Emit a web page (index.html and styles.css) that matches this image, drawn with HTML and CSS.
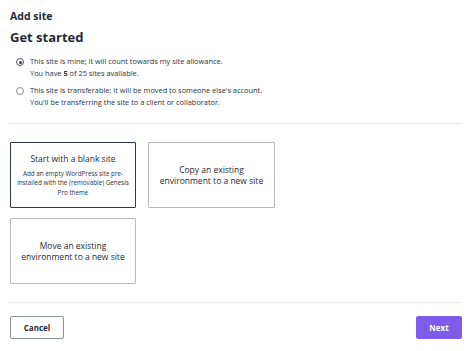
FILE: index.html
```html
<!DOCTYPE html>
<html>
<head>
<meta charset="utf-8">
<link rel="stylesheet" href="styles.css">
</head>
<body>
<div class="page">
  <h1 class="title">Add site</h1>
  <h2 class="subtitle">Get started</h2>
  <div class="options">
    <label class="option">
      <span class="radio checked"></span>
      <span class="option-text">This site is mine; it will count towards my site allowance.<br>You have <b>5</b> of 25 sites available.</span>
    </label>
    <label class="option">
      <span class="radio"></span>
      <span class="option-text">This site is transferable; it will be moved to someone else's account.<br>You'll be transferring the site to a client or collaborator.</span>
    </label>
  </div>
  <hr class="divider">
  <div class="cards">
    <div class="card selected">
      <div class="card-title">Start with a blank site</div>
      <div class="card-desc">Add an empty WordPress site pre-installed with the (removable) Genesis Pro theme</div>
    </div>
    <div class="card">
      <div class="card-title">Copy an existing environment to a new site</div>
    </div>
    <div class="card">
      <div class="card-title">Move an existing environment to a new site</div>
    </div>
  </div>
  <hr class="divider bottom">
  <div class="actions">
    <button class="btn btn-cancel">Cancel</button>
    <button class="btn btn-next">Next</button>
  </div>
</div>
</body>
</html>
```
FILE: styles.css
```css
* { box-sizing: border-box; }
html, body { margin: 0; background: #fff; }
body {
  font-family: "Open Sans", "Liberation Sans", sans-serif;
  color: #1f2b36;
}
.page {
  padding: 9px 12px 0 10px;
}
.title {
  font-size: 10.5px;
  font-weight: 700;
  margin: 0;
  line-height: 14px;
}
.subtitle {
  font-size: 13px;
  font-weight: 700;
  margin: 5px 0 0;
  line-height: 18px;
}
.options {
  margin-top: 10px;
  padding-left: 6px;
  display: flex;
  flex-direction: column;
  gap: 6px;
}
.option {
  display: flex;
  align-items: flex-start;
  gap: 6px;
  font-size: 7.4px;
  line-height: 11.5px;
  color: #2a3540;
}
.option b { font-weight: 700; }
.radio {
  flex: none;
  width: 8px;
  height: 8px;
  border: 1px solid #8a9299;
  border-radius: 50%;
  margin-top: 2px;
  position: relative;
  background: #fff;
}
.radio.checked {
  border-color: #4a535b;
}
.radio.checked::after {
  content: "";
  position: absolute;
  left: 1.5px;
  top: 1.5px;
  width: 3px;
  height: 3px;
  border-radius: 50%;
  background: #2a3540;
}
.divider {
  border: 0;
  border-top: 1px solid #ececec;
  margin: 15px 0 0 -2px;
}
.cards {
  margin-top: 18px;
  display: grid;
  grid-template-columns: 126px 127px;
  grid-auto-rows: 66px;
  column-gap: 12px;
  row-gap: 10px;
}
.card {
  border: 1px solid #b5b9bd;
  border-radius: 1px;
  display: flex;
  flex-direction: column;
  align-items: center;
  justify-content: center;
  text-align: center;
  padding: 5px 6px;
}
.card.selected {
  border: 1.5px solid #2f3a44;
}
.card-title {
  font-size: 8.5px;
  line-height: 11px;
  color: #1f2b36;
}
.card-desc {
  font-size: 6.3px;
  line-height: 9.5px;
  margin-top: 5px;
  color: #2a3540;
}
.divider.bottom {
  margin-top: 18px;
}
.actions {
  margin-top: 13px;
  display: flex;
  justify-content: space-between;
}
.btn {
  font-family: "Open Sans", "Liberation Sans", sans-serif;
  font-size: 8px;
  font-weight: 700;
  height: 23px;
  border-radius: 2px;
  cursor: pointer;
}
.btn-cancel {
  width: 54px;
  background: #fff;
  border: 1px solid #8c9398;
  color: #1f2b36;
}
.btn-next {
  width: 46px;
  background: #7c5ce8;
  border: 0;
  color: #fff;
}
```
